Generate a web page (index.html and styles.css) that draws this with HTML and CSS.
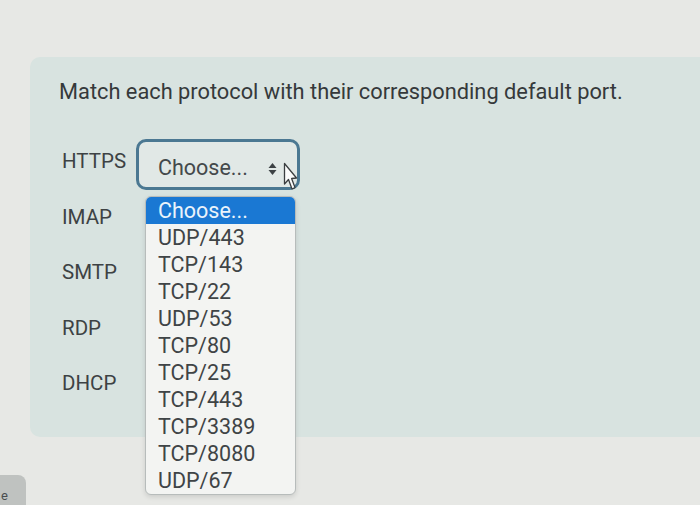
FILE: index.html
```html
<!DOCTYPE html>
<html lang="en">
<head>
<meta charset="utf-8">
<title>Match protocols</title>
<link rel="stylesheet" href="styles.css">
</head>
<body>
<main class="page">
  <section class="card">
    <h1 class="prompt">Match each protocol with their corresponding default port.</h1>
    <div class="pairs">
      <div class="pair">
        <span class="proto">HTTPS</span>
        <div class="picker">
          <div class="select is-open">
            <span class="select-value">Choose...</span>
            <svg class="select-arrows" width="9" height="14" viewBox="0 0 9 14" aria-hidden="true">
              <path d="M4.5 1 L8.5 6 H0.5 Z" fill="#3c4144"/>
              <path d="M4.5 13 L8.5 8 H0.5 Z" fill="#3c4144"/>
            </svg>
          </div>
          <svg class="pointer" width="15" height="29" viewBox="0 0 15 29" aria-hidden="true">
            <path d="M1.5 1.5 L1.5 22 L5.5 17.5 L9 27 L12 25.6 L8.6 16.5 L13.5 16 Z" fill="#fbfbfb" stroke="#3a3e40" stroke-width="1.3" stroke-linejoin="round"/>
          </svg>
          <ul class="menu">
            <li class="option is-active">Choose...</li>
            <li class="option">UDP/443</li>
            <li class="option">TCP/143</li>
            <li class="option">TCP/22</li>
            <li class="option">UDP/53</li>
            <li class="option">TCP/80</li>
            <li class="option">TCP/25</li>
            <li class="option">TCP/443</li>
            <li class="option">TCP/3389</li>
            <li class="option">TCP/8080</li>
            <li class="option">UDP/67</li>
          </ul>
        </div>
      </div>
      <div class="pair"><span class="proto">IMAP</span></div>
      <div class="pair"><span class="proto">SMTP</span></div>
      <div class="pair"><span class="proto">RDP</span></div>
      <div class="pair"><span class="proto">DHCP</span></div>
    </div>
  </section>
  <div class="side-tab"><span>e</span></div>
</main>
</body>
</html>
```

FILE: styles.css
```css
* {
  box-sizing: border-box;
}

html, body {
  margin: 0;
  padding: 0;
  width: 700px;
  height: 505px;
  overflow: hidden;
}

body {
  background: #e7e8e5;
  font-family: Roboto, "Liberation Sans", sans-serif;
  color: #3b4042;
}

.page {
  position: relative;
  width: 700px;
  height: 505px;
  padding-top: 57px;
  padding-left: 30px;
}

.card {
  height: 380px;
  background: #d8e3e0;
  border-radius: 10px 0 0 10px;
  padding: 21px 0 0 29px;
}

.prompt {
  margin: 0;
  font-size: 21.8px;
  font-weight: 400;
  line-height: 28px;
  color: #35393b;
}

.pairs {
  margin-top: 35px;
  display: flex;
  flex-direction: column;
}

.pair {
  display: flex;
  align-items: center;
  height: 55.5px;
  padding-left: 3px;
}

.pair:first-child {
  margin-top: -4px;
}

.proto {
  width: 74px;
  font-size: 20.5px;
  line-height: 24px;
  padding-bottom: 7px;
  color: #3d4244;
}

.picker {
  position: relative;
}

.select {
  display: flex;
  align-items: center;
  width: 164px;
  height: 51px;
  border: 3px solid #4b7892;
  border-radius: 10px;
  padding: 5px 0 0 19px;
  background: #e1e8e6;
}

.select-value {
  font-size: 21.5px;
  color: #44494b;
}

.select-arrows {
  margin-left: 20px;
  margin-top: 3px;
}

.pointer {
  position: absolute;
  left: 147px;
  top: 23px;
}

.menu {
  position: absolute;
  left: 9px;
  top: 57px;
  width: 151px;
  margin: 0;
  padding: 0;
  list-style: none;
  background: #f3f4f2;
  border: 1px solid #b7bcbb;
  border-radius: 6px;
  overflow: hidden;
  box-shadow: 0 2px 5px rgba(0, 0, 0, 0.12);
  z-index: 2;
}

.option {
  height: 27px;
  line-height: 28px;
  padding-left: 12px;
  font-size: 21.5px;
  color: #3f4446;
}

.option.is-active {
  background: #1a78d3;
  color: #eaf3fb;
}

.side-tab {
  position: absolute;
  left: 0;
  top: 475px;
  width: 26px;
  height: 30px;
  background: #bfc2c0;
  border-top-right-radius: 8px;
  overflow: hidden;
}

.side-tab span {
  position: absolute;
  left: 1px;
  top: 13px;
  font-size: 13px;
  line-height: 16px;
  color: #4a4e50;
}
```
